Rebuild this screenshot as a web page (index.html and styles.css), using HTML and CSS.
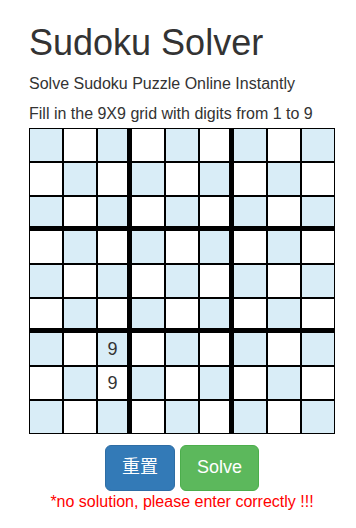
FILE: index.html
```html
<!DOCTYPE html>
<html>
<head>
<meta charset="utf-8">
<link rel="stylesheet" href="styles.css">
</head>
<body>
<div class="container">
  <h1 class="title">Sudoku Solver</h1>
  <p class="subtitle">Solve Sudoku Puzzle Online Instantly</p>
  <p class="hint">Fill in the 9X9 grid with digits from 1 to 9</p>
  <div class="board">
    <div class="cell b"></div><div class="cell"></div><div class="cell b tr"></div><div class="cell"></div><div class="cell b"></div><div class="cell tr"></div><div class="cell b"></div><div class="cell"></div><div class="cell b"></div>
    <div class="cell"></div><div class="cell b"></div><div class="cell tr"></div><div class="cell b"></div><div class="cell"></div><div class="cell b tr"></div><div class="cell"></div><div class="cell b"></div><div class="cell"></div>
    <div class="cell b tb"></div><div class="cell tb"></div><div class="cell b tr tb"></div><div class="cell tb"></div><div class="cell b tb"></div><div class="cell tr tb"></div><div class="cell b tb"></div><div class="cell tb"></div><div class="cell b tb"></div>
    <div class="cell"></div><div class="cell b"></div><div class="cell tr"></div><div class="cell b"></div><div class="cell"></div><div class="cell b tr"></div><div class="cell"></div><div class="cell b"></div><div class="cell"></div>
    <div class="cell b"></div><div class="cell"></div><div class="cell b tr"></div><div class="cell"></div><div class="cell b"></div><div class="cell tr"></div><div class="cell b"></div><div class="cell"></div><div class="cell b"></div>
    <div class="cell tb"></div><div class="cell b tb"></div><div class="cell tr tb"></div><div class="cell b tb"></div><div class="cell tb"></div><div class="cell b tr tb"></div><div class="cell tb"></div><div class="cell b tb"></div><div class="cell tb"></div>
    <div class="cell b"></div><div class="cell"></div><div class="cell b tr">9</div><div class="cell"></div><div class="cell b"></div><div class="cell tr"></div><div class="cell b"></div><div class="cell"></div><div class="cell b"></div>
    <div class="cell"></div><div class="cell b"></div><div class="cell tr">9</div><div class="cell b"></div><div class="cell"></div><div class="cell b tr"></div><div class="cell"></div><div class="cell b"></div><div class="cell"></div>
    <div class="cell b"></div><div class="cell"></div><div class="cell b tr"></div><div class="cell"></div><div class="cell b"></div><div class="cell tr"></div><div class="cell b"></div><div class="cell"></div><div class="cell b"></div>
  </div>
  <div class="actions">
    <button class="btn btn-reset">重置</button>
    <button class="btn btn-solve">Solve</button>
  </div>
  <p class="error">*no solution, please enter correctly !!!</p>
</div>
</body>
</html>
```
FILE: styles.css
```css
html, body {
  margin: 0;
  padding: 0;
  background: #fff;
}
body {
  font-family: "Liberation Sans", Arial, "Noto Sans CJK SC", sans-serif;
  color: #333;
  font-size: 16px;
  line-height: 1.42857;
}
.container {
  width: 306px;
  margin-left: 29px;
}
.title {
  font-size: 36px;
  font-weight: 500;
  line-height: 1.1;
  margin: 23px 0 10px;
}
.subtitle {
  font-size: 16px;
  margin: 0 0 8px;
}
.hint {
  font-size: 16px;
  margin: 0 0 2px;
}
.board {
  display: grid;
  grid-template-columns: repeat(9, 34px);
  grid-auto-rows: 34px;
  width: 306px;
}
.cell {
  box-sizing: border-box;
  border: 1px solid #000;
  background: #fff;
  display: flex;
  align-items: center;
  justify-content: center;
  font-size: 18px;
  color: #333;
  padding-top: 2px;
}
.cell.b {
  background: #d9edf7;
}
.cell.tr {
  border-right-width: 4px;
}
.cell.tb {
  border-bottom-width: 4px;
}
.actions {
  display: flex;
  justify-content: center;
  gap: 5px;
  margin-top: 11px;
}
.btn {
  font-family: "Liberation Sans", Arial, "Noto Sans CJK SC", sans-serif;
  font-size: 18px;
  line-height: 1.3333;
  padding: 10px 16px;
  border-radius: 6px;
  border: 1px solid transparent;
  color: #fff;
  height: 46px;
  box-sizing: border-box;
}
.btn-reset {
  background: #337ab7;
  border-color: #2e6da4;
}
.btn-solve {
  background: #5cb85c;
  border-color: #4cae4c;
}
.error {
  color: #f00;
  text-align: center;
  margin: 0;
  font-size: 16px;
}
```
